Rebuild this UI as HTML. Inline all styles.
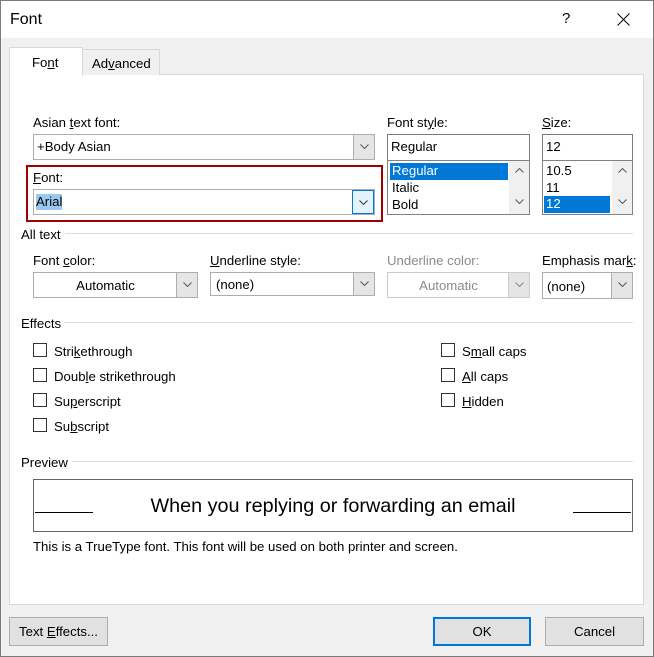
<!DOCTYPE html>
<html><head><meta charset="utf-8"><style>
*{box-sizing:border-box;margin:0;padding:0}
body{width:654px;height:657px;overflow:hidden;background:#f0f0f0;font-family:"Liberation Sans",sans-serif;font-size:13.2px;color:#000;position:relative}
.a{position:absolute;white-space:nowrap}
.t{position:absolute;white-space:nowrap;line-height:16px}
.box{position:absolute;background:#fff;border:1px solid #adadad}
.btn{position:absolute;background:#e1e1e1;border:1px solid #adadad;text-align:center;line-height:27px}
.dd{position:absolute;top:0;right:0;bottom:0;width:21px;background:#e5e5e5;border-left:1px solid #adadad}
.dd svg,.sc svg{position:absolute;left:6px;top:9px}
.sep{position:absolute;height:1px;background:#dcdcdc}
.cb{position:absolute;width:14px;height:14px;border:1px solid #333;background:#fff}
u{text-decoration:underline}
.sel{background:#0078d7;color:#fff}
.sc{position:absolute;right:0;top:0;bottom:0;width:20px;background:#f0f0f0}
</style></head><body>
<div class="a" style="left:0;top:0;width:654px;height:657px;border:1px solid #7a7a7a"></div>
<div class="a" style="left:1px;top:1px;width:652px;height:37px;background:#fff"></div>
<div class="t" style="left:10px;top:11px;font-size:16px;line-height:18px">Font</div>
<div class="t" style="left:562px;top:11px;font-size:15px">?</div>
<svg class="a" style="left:617px;top:13px" width="13" height="13"><path d="M0.5 0.5L12.5 12.5M12.5 0.5L0.5 12.5" stroke="#000" stroke-width="1"/></svg>

<div class="a" style="left:9px;top:74px;width:635px;height:531px;background:#fff;border:1px solid #d9d9d9"></div>
<div class="a" style="left:82px;top:49px;width:78px;height:26px;background:#f0f0f0;border:1px solid #d9d9d9;border-bottom:none"></div>
<div class="t" style="left:92px;top:56px">Ad<u>v</u>anced</div>
<div class="a" style="left:9px;top:47px;width:74px;height:29px;background:#fff;border:1px solid #d9d9d9;border-bottom:none"></div>
<div class="t" style="left:32px;top:55px">Fo<u>n</u>t</div>

<div class="t" style="left:33px;top:115px">Asian <u>t</u>ext font:</div>
<div class="box" style="left:33px;top:134px;width:342px;height:26px;border-color:#adadad"><div class="t" style="left:3px;top:4px">+Body Asian</div><div class="dd"><svg width="9" height="5"><path d="M0.5 0.5L4.5 4.5L8.5 0.5" fill="none" stroke="#555"/></svg></div></div>
<div class="a" style="left:26px;top:165px;width:357px;height:57px;border:2px solid #a00000"></div>
<div class="t" style="left:33px;top:170px"><u>F</u>ont:</div>
<div class="box" style="left:33px;top:189px;width:342px;height:26px"><div class="t" style="left:2px;top:4px;background:#99c9ef">Arial</div><div class="dd" style="background:#e5f1fb;border:1px solid #0078d7;width:22px"><svg width="9" height="5"><path d="M0.5 0.5L4.5 4.5L8.5 0.5" fill="none" stroke="#333"/></svg></div></div>

<div class="t" style="left:387px;top:115px">Font st<u>y</u>le:</div>
<div class="box" style="left:387px;top:134px;width:143px;height:27px;border-color:#7a7a7a"><div class="t" style="left:3px;top:4px">Regular</div></div>
<div class="box" style="left:387px;top:160px;width:143px;height:55px;border-color:#828282">
<div class="t sel" style="left:2px;top:2px;width:118px;height:17px;padding-left:2px">Regular</div>
<div class="t" style="left:4px;top:19px">Italic</div>
<div class="t" style="left:4px;top:36px">Bold</div>
<div class="sc"><svg width="9" height="5" style="top:7px"><path d="M0.5 4.5L4.5 0.5L8.5 4.5" fill="none" stroke="#555"/></svg><svg width="9" height="5" style="top:38px"><path d="M0.5 0.5L4.5 4.5L8.5 0.5" fill="none" stroke="#555"/></svg></div></div>

<div class="t" style="left:542px;top:115px"><u>S</u>ize:</div>
<div class="box" style="left:542px;top:134px;width:91px;height:27px;border-color:#7a7a7a"><div class="t" style="left:3px;top:4px">12</div></div>
<div class="box" style="left:542px;top:160px;width:91px;height:55px;border-color:#828282">
<div class="t" style="left:3px;top:2px">10.5</div>
<div class="t" style="left:3px;top:19px">11</div>
<div class="t sel" style="left:1px;top:35px;width:66px;height:17px;padding-left:2px">12</div>
<div class="sc"><svg width="9" height="5" style="top:7px"><path d="M0.5 4.5L4.5 0.5L8.5 4.5" fill="none" stroke="#555"/></svg><svg width="9" height="5" style="top:38px"><path d="M0.5 0.5L4.5 4.5L8.5 0.5" fill="none" stroke="#555"/></svg></div></div>

<div class="t" style="left:21px;top:227px">All text</div>
<div class="sep" style="left:65px;top:233px;width:568px"></div>
<div class="t" style="left:33px;top:253px">Font <u>c</u>olor:</div>
<div class="box" style="left:33px;top:272px;width:165px;height:26px"><div class="t" style="left:0;width:143px;text-align:center;top:5px">Automatic</div><div class="dd"><svg width="9" height="5"><path d="M0.5 0.5L4.5 4.5L8.5 0.5" fill="none" stroke="#555"/></svg></div></div>
<div class="t" style="left:210px;top:253px"><u>U</u>nderline style:</div>
<div class="box" style="left:210px;top:272px;width:165px;height:24px"><div class="t" style="left:5px;top:4px">(none)</div><div class="dd"><svg width="9" height="5" style="top:8px"><path d="M0.5 0.5L4.5 4.5L8.5 0.5" fill="none" stroke="#555"/></svg></div></div>
<div class="t" style="left:387px;top:253px;color:#8a8a8a">Underline color:</div>
<div class="box" style="left:387px;top:272px;width:143px;height:26px;border-color:#cccccc"><div class="t" style="left:0;width:121px;text-align:center;top:5px;color:#8a8a8a">Automatic</div><div class="dd" style="border-color:#ccc"><svg width="9" height="5"><path d="M0.5 0.5L4.5 4.5L8.5 0.5" fill="none" stroke="#888"/></svg></div></div>
<div class="t" style="left:542px;top:253px">Emphasis mar<u>k</u>:</div>
<div class="box" style="left:542px;top:272px;width:91px;height:27px"><div class="t" style="left:4px;top:6px">(none)</div><div class="dd"><svg width="9" height="5"><path d="M0.5 0.5L4.5 4.5L8.5 0.5" fill="none" stroke="#555"/></svg></div></div>

<div class="t" style="left:21px;top:316px">Effects</div>
<div class="sep" style="left:64px;top:322px;width:569px"></div>
<div class="cb" style="left:33px;top:343px"></div><div class="t" style="left:54px;top:344px">Stri<u>k</u>ethrough</div>
<div class="cb" style="left:33px;top:368px"></div><div class="t" style="left:54px;top:369px">Doub<u>l</u>e strikethrough</div>
<div class="cb" style="left:33px;top:393px"></div><div class="t" style="left:54px;top:394px">Su<u>p</u>erscript</div>
<div class="cb" style="left:33px;top:418px"></div><div class="t" style="left:54px;top:419px">Su<u>b</u>script</div>
<div class="cb" style="left:441px;top:343px"></div><div class="t" style="left:462px;top:344px">S<u>m</u>all caps</div>
<div class="cb" style="left:441px;top:368px"></div><div class="t" style="left:462px;top:369px"><u>A</u>ll caps</div>
<div class="cb" style="left:441px;top:393px"></div><div class="t" style="left:462px;top:394px"><u>H</u>idden</div>

<div class="t" style="left:21px;top:455px">Preview</div>
<div class="sep" style="left:72px;top:461px;width:561px"></div>
<div class="a" style="left:33px;top:479px;width:600px;height:53px;border:1px solid #646464;background:#fff"></div>
<div class="a" style="left:35px;top:512px;width:58px;height:1px;background:#000"></div>
<div class="a" style="left:573px;top:512px;width:58px;height:1px;background:#000"></div>
<div class="t" style="left:33px;width:600px;text-align:center;top:495px;font-size:19.8px;line-height:22px">When you replying or forwarding an email</div>
<div class="t" style="left:33px;top:539px">This is a TrueType font. This font will be used on both printer and screen.</div>

<div class="btn" style="left:9px;top:617px;width:99px;height:29px">Text <u>E</u>ffects...</div>
<div class="btn" style="left:433px;top:617px;width:98px;height:29px;border:2px solid #0078d7;line-height:26px">OK</div>
<div class="btn" style="left:545px;top:617px;width:99px;height:29px">Cancel</div>
</body></html>
